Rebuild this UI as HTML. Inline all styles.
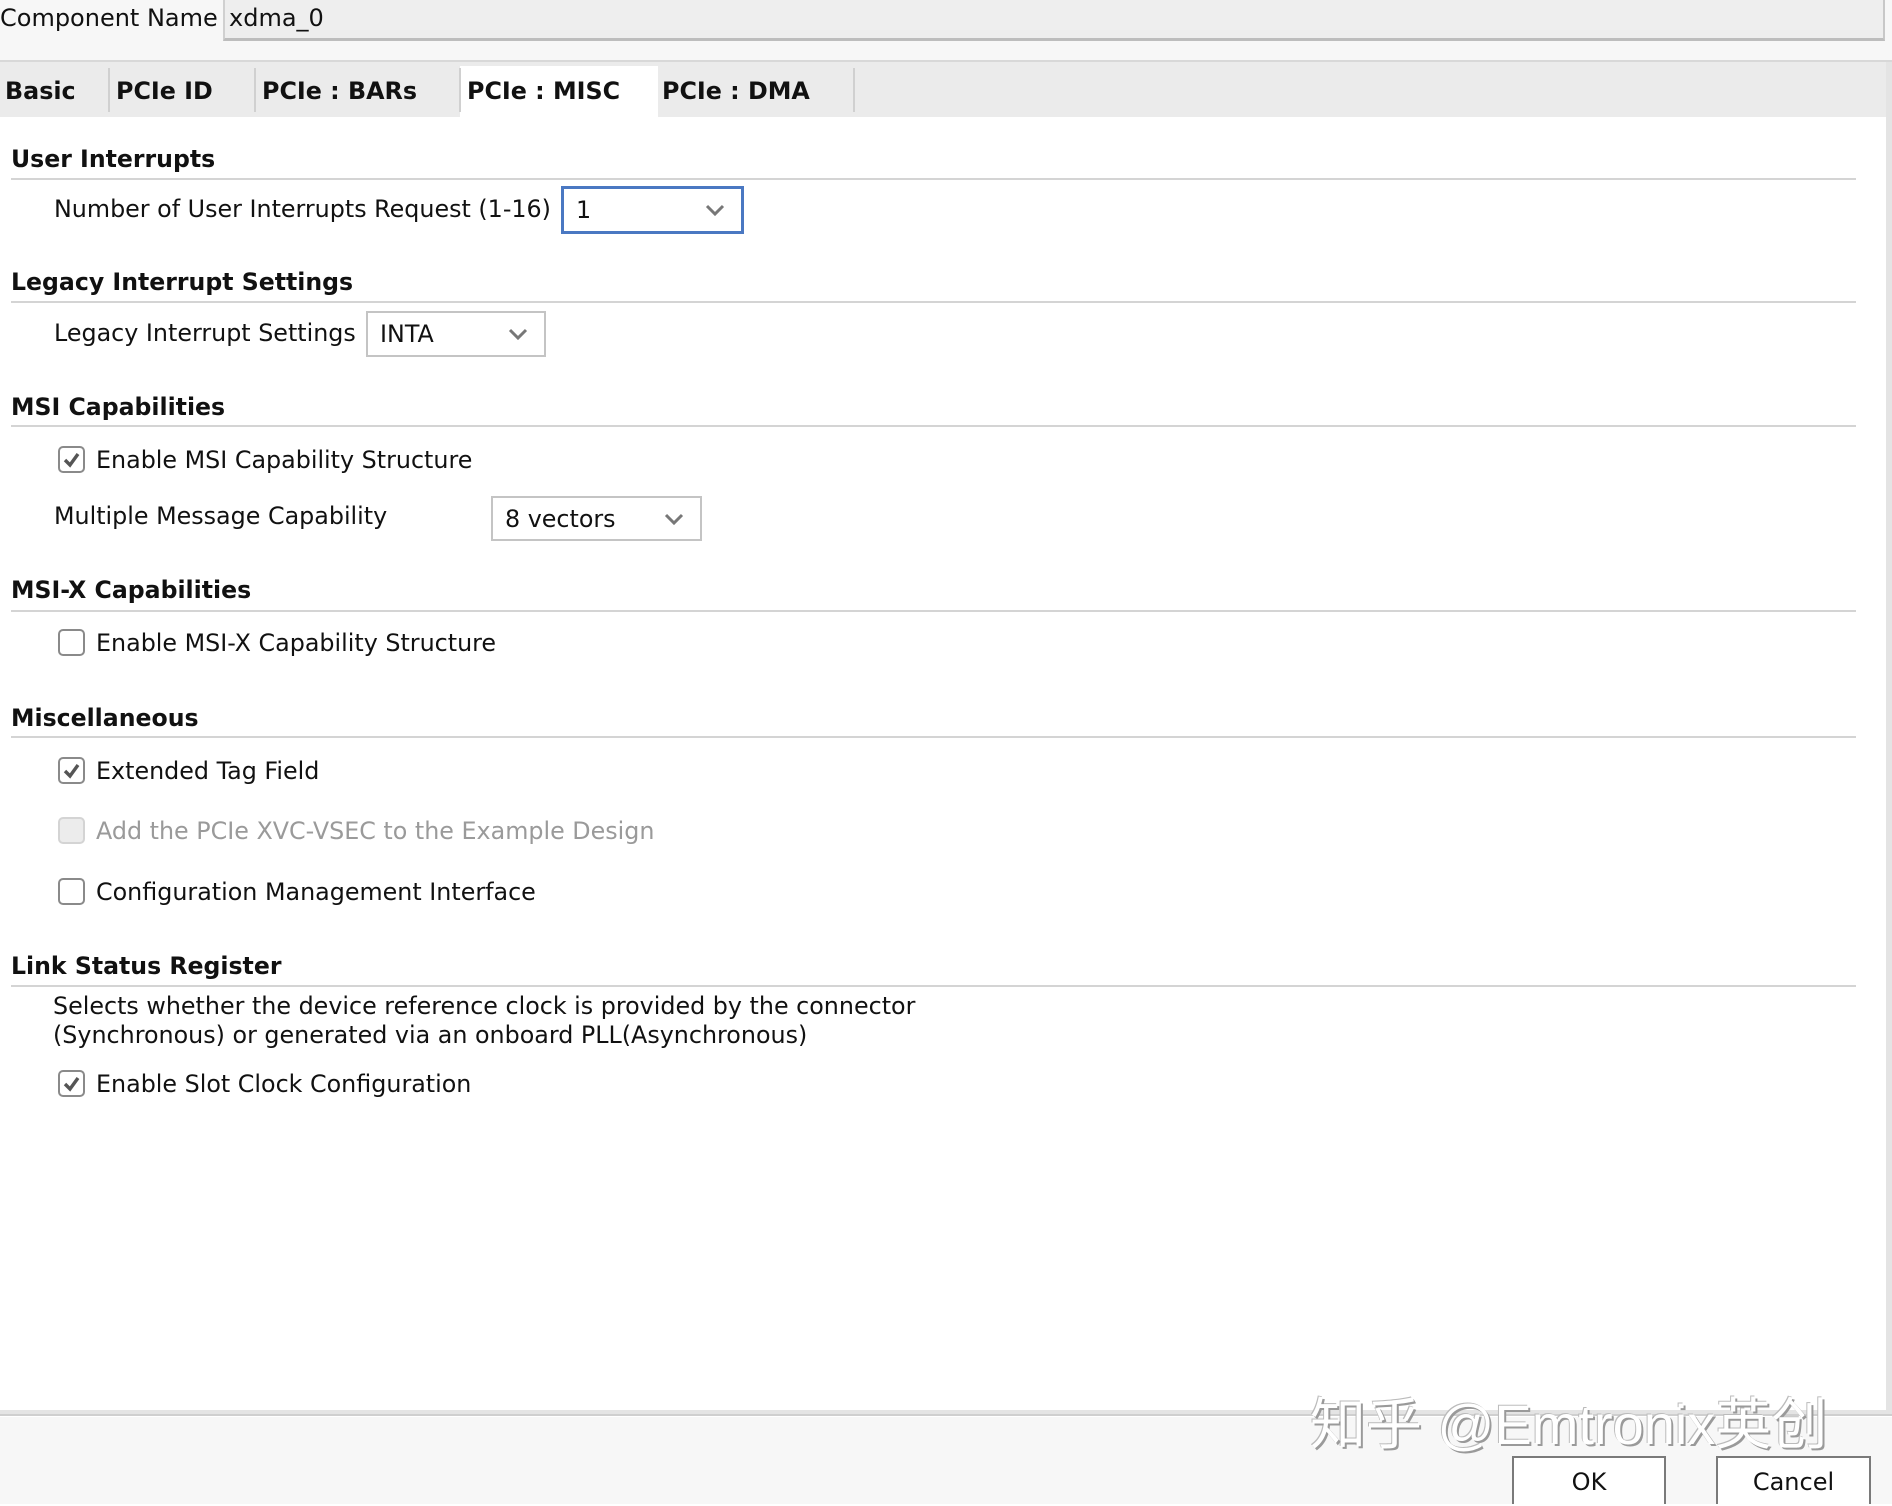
<!DOCTYPE html>
<html><head><meta charset="utf-8"><style>
*{margin:0;padding:0;box-sizing:border-box}
body{width:1892px;height:1504px;position:relative;overflow:hidden;background:#fff;font-family:"DejaVu Sans","Liberation Sans",sans-serif;color:#111}
.a{position:absolute;white-space:nowrap}
.t{font-size:23.8px;line-height:30px}
.h{font-size:23.6px;line-height:30px;font-weight:bold}
.line{position:absolute;left:11px;width:1845px;height:2px;background:#d4d4d4}
.cb{position:absolute;left:58px;width:27px;height:27px;border:2px solid #8a8a8a;border-radius:5px;background:#fff}
.cb svg{position:absolute;left:2px;top:2px}
.dd{position:absolute;border:2px solid #c4c4c4;background:#fff}
.dd span{position:absolute;left:12px;top:50%;transform:translateY(-50%);font-size:23.8px}
.dd svg{position:absolute;right:16px;top:50%;margin-top:-6px}
.tab{position:absolute;top:62px;height:55px;font-size:23.8px;font-weight:bold;line-height:58px}
.sep{position:absolute;top:68px;width:2px;height:44px;background:#d0d0d0}
.btn{position:absolute;top:1456px;height:48px;border:2px solid #7a7a7a;border-bottom:none;background:#fff;font-size:24px;text-align:center;line-height:48px}
</style></head><body>
<div class="a" style="left:0;top:0;width:1892px;height:61px;background:#f7f7f7"></div>
<div class="a t" style="left:0;top:3px;font-size:24px">Component Name</div>
<div class="a" style="left:223px;top:0;width:1662px;height:41px;background:#eeeeee;border-left:2px solid #d0d0d0;border-bottom:3px solid #bdbdbd;border-right:2px solid #c8c8c8"></div>
<div class="a t" style="left:229px;top:3px;font-size:24px">xdma_0</div>
<div class="a" style="left:0;top:60px;width:1892px;height:2px;background:#d8d8d8"></div>
<div class="a" style="left:0;top:62px;width:1888px;height:55px;background:#ebebeb"></div>
<div class="a" style="left:460px;top:66px;width:198px;height:51px;background:#fff"></div>
<div class="tab" style="left:5px">Basic</div>
<div class="tab" style="left:116px">PCIe ID</div>
<div class="tab" style="left:262px">PCIe : BARs</div>
<div class="tab" style="left:467px">PCIe : MISC</div>
<div class="tab" style="left:662px">PCIe : DMA</div>
<div class="sep" style="left:108px"></div>
<div class="sep" style="left:254px"></div>
<div class="sep" style="left:459px"></div>
<div class="sep" style="left:853px"></div>
<div class="a" style="left:1886px;top:62px;width:6px;height:1350px;background:#e4e4e4"></div>

<div class="a h" style="left:11px;top:144px">User Interrupts</div>
<div class="line" style="top:178px"></div>
<div class="a t" style="left:54px;top:194px">Number of User Interrupts Request (1-16)</div>
<div class="dd" style="left:561px;top:186px;width:183px;height:48px;border:3px solid #4a78c2"><span>1</span><svg width="20" height="12"><path d="M2 2 L10 10 L18 2" stroke="#777" stroke-width="3" fill="none"/></svg></div>

<div class="a h" style="left:11px;top:267px">Legacy Interrupt Settings</div>
<div class="line" style="top:301px"></div>
<div class="a t" style="left:54px;top:318px">Legacy Interrupt Settings</div>
<div class="dd" style="left:366px;top:311px;width:180px;height:46px"><span>INTA</span><svg width="20" height="12"><path d="M2 2 L10 10 L18 2" stroke="#777" stroke-width="3" fill="none"/></svg></div>

<div class="a h" style="left:11px;top:392px">MSI Capabilities</div>
<div class="line" style="top:425px"></div>
<div class="cb" style="top:446px"><svg width="19" height="19"><path d="M3 10 L8 15 L16 4" stroke="#555" stroke-width="3.4" fill="none"/></svg></div>
<div class="a t" style="left:96px;top:445px">Enable MSI Capability Structure</div>
<div class="a t" style="left:54px;top:501px">Multiple Message Capability</div>
<div class="dd" style="left:491px;top:496px;width:211px;height:45px"><span>8 vectors</span><svg width="20" height="12"><path d="M2 2 L10 10 L18 2" stroke="#777" stroke-width="3" fill="none"/></svg></div>

<div class="a h" style="left:11px;top:575px">MSI-X Capabilities</div>
<div class="line" style="top:610px"></div>
<div class="cb" style="top:629px"></div>
<div class="a t" style="left:96px;top:628px">Enable MSI-X Capability Structure</div>

<div class="a h" style="left:11px;top:703px">Miscellaneous</div>
<div class="line" style="top:736px"></div>
<div class="cb" style="top:757px"><svg width="19" height="19"><path d="M3 10 L8 15 L16 4" stroke="#555" stroke-width="3.4" fill="none"/></svg></div>
<div class="a t" style="left:96px;top:756px">Extended Tag Field</div>
<div class="cb" style="top:817px;border-color:#d4d4d4;background:#ececec"></div>
<div class="a t" style="left:96px;top:816px;color:#9a9a9a">Add the PCIe XVC-VSEC to the Example Design</div>
<div class="cb" style="top:878px"></div>
<div class="a t" style="left:96px;top:877px">Configuration Management Interface</div>

<div class="a h" style="left:11px;top:951px">Link Status Register</div>
<div class="line" style="top:985px"></div>
<div class="a t" style="left:53px;top:991px">Selects whether the device reference clock is provided by the connector</div>
<div class="a t" style="left:53px;top:1020px">(Synchronous) or generated via an onboard PLL(Asynchronous)</div>
<div class="cb" style="top:1070px"><svg width="19" height="19"><path d="M3 10 L8 15 L16 4" stroke="#555" stroke-width="3.4" fill="none"/></svg></div>
<div class="a t" style="left:96px;top:1069px">Enable Slot Clock Configuration</div>

<div class="a" style="left:0;top:1410px;width:1892px;height:6px;background:#e4e4e4;border-bottom:2px solid #cfcfcf"></div>
<div class="a" style="left:0;top:1417px;width:1892px;height:87px;background:#f7f7f7"></div>
<div class="a" style="left:1310px;top:1390px;font-size:56px;line-height:70px;color:#fff;font-family:'Liberation Sans','Noto Sans CJK SC',sans-serif;text-shadow:2px 2px 0 #9a9a9a,-1px -1px 0 #bbb">知乎 @Emtronix英创</div>
<div class="btn" style="left:1512px;width:154px">OK</div>
<div class="btn" style="left:1716px;width:155px">Cancel</div>
</body></html>
